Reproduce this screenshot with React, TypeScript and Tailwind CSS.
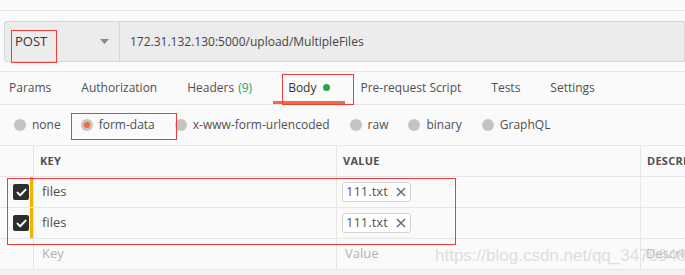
import React from "react";

const tabs = [
  { label: "Params" },
  { label: "Authorization" },
  { label: "Headers", count: "(9)" },
  { label: "Body", active: true },
  { label: "Pre-request Script" },
  { label: "Tests" },
  { label: "Settings" },
];

const bodyTypes = ["none", "form-data", "x-www-form-urlencoded", "raw", "binary", "GraphQL"];

const rows = [
  { key: "files", file: "111.txt" },
  { key: "files", file: "111.txt" },
];

const Radio = ({ on }: { on?: boolean }) => (
  <span className="w-3 h-3 rounded-full bg-[#c4c4c4] flex items-center justify-center">
    {on && <span className="w-[6px] h-[6px] rounded-full bg-[#f26b3a]" />}
  </span>
);

const CheckBox = () => (
  <span className="w-4 h-4 rounded-[2px] bg-[#2d2d2d] flex items-center justify-center">
    <svg width="11" height="9" viewBox="0 0 11 9">
      <path d="M1.5 4.6 L4.2 7.2 L9.6 1.6" stroke="#fff" strokeWidth="2" fill="none" strokeLinecap="round" strokeLinejoin="round" />
    </svg>
  </span>
);

const FileChip = ({ name }: { name: string }) => (
  <span className="h-5 flex items-center gap-[8px] pl-[3px] pr-[4px] border border-[#d4d4d4] rounded-[3px] bg-white text-[#555]">
    {name}
    <svg width="10" height="10" viewBox="0 0 10 10">
      <path d="M1 1 L9 9 M9 1 L1 9" stroke="#6a6a6a" strokeWidth="1.5" />
    </svg>
  </span>
);

const App = () => {
  return (
    <div className="relative w-[685px] h-[275px] overflow-hidden bg-[#fafafa] text-[12px] text-[#505050] font-['Open_Sans',sans-serif]">
      <div className="h-[11px] border-b border-[#e6e6e6]" />

      <div className="mt-[10px] ml-[4px] h-[41px] flex border border-[#d6d6d6] rounded-l-[3px] bg-[#ececec]">
        <div className="w-[115px] shrink-0 flex items-center justify-between pl-[10px] pr-[10px] border-r border-[#d6d6d6] text-[13px] text-[#333]">
          <span className="font-medium">POST</span>
          <svg width="9" height="5" viewBox="0 0 9 5">
            <path d="M0 0 H9 L4.5 5 Z" fill="#888" />
          </svg>
        </div>
        <div className="flex items-center pl-[10px] text-[12px] text-[#444]">172.31.132.130:5000/upload/MultipleFiles</div>
      </div>

      <div className="mt-[9px] h-[34px] flex border-t border-b border-[#e6e6e6] ml-[-6px] text-[12px]">
        {tabs.map((t) => (
          <div
            key={t.label}
            className={`h-full flex items-center gap-[7px] px-[15px] pt-[2px] border-b-[3px] ${
              t.active ? "border-[#f26b3a] text-[#333]" : "border-transparent"
            }`}
          >
            <span>
              {t.label}
              {t.count && <span className="ml-1 mr-[6px] text-[#26a65b]">{t.count}</span>}
            </span>
            {t.active && <span className="w-[7px] h-[7px] rounded-full bg-[#2ba24c]" />}
          </div>
        ))}
      </div>

      <div className="h-[40px] flex items-center pl-[14px] gap-[20px] text-[12px]">
        {bodyTypes.map((b) => (
          <div key={b} className="flex items-center gap-[6px]">
            <Radio on={b === "form-data"} />
            <span>{b}</span>
          </div>
        ))}
      </div>

      <div className="border-t border-[#e6e6e6]">
        <div className="h-[31px] flex border-b border-[#e6e6e6] text-[11px] font-bold text-[#505050] tracking-wide">
          <div className="w-[34px] shrink-0 border-r border-[#e6e6e6]" />
          <div className="w-[303px] shrink-0 flex items-center pl-[6px] border-r border-[#e6e6e6]">KEY</div>
          <div className="w-[304px] shrink-0 flex items-center pl-[6px] border-r border-[#e6e6e6]">VALUE</div>
          <div className="flex-1 flex items-center pl-[6px] whitespace-nowrap">DESCRIPTION</div>
        </div>

        {rows.map((r, i) => (
          <div key={i} className="h-[31px] flex border-b border-[#e6e6e6] text-[13px]">
            <div className="w-[34px] shrink-0 flex items-center justify-end border-r border-[#e6e6e6]">
              <span className="mr-[1px]">
                <CheckBox />
              </span>
              <span className="w-[3px] h-full bg-[#f2b300]" />
            </div>
            <div className="w-[303px] shrink-0 flex items-center pl-[8px] border-r border-[#e6e6e6]">{r.key}</div>
            <div className="w-[304px] shrink-0 flex items-center pl-[5px] border-r border-[#e6e6e6]">
              <FileChip name={r.file} />
            </div>
            <div className="flex-1" />
          </div>
        ))}

        <div className="h-[31px] flex border-b border-[#e6e6e6] text-[13px] text-[#b3b3b3]">
          <div className="w-[34px] shrink-0 border-r border-[#e6e6e6]" />
          <div className="w-[303px] shrink-0 flex items-center pl-[8px] border-r border-[#e6e6e6]">Key</div>
          <div className="w-[304px] shrink-0 flex items-center pl-[8px] border-r border-[#e6e6e6]">Value</div>
          <div className="flex-1 flex items-center pl-[5px] whitespace-nowrap">Description</div>
        </div>
      </div>
      <div className="h-[10px] bg-[#f2f2f2]" />

      {/* annotation boxes & watermark */}
      <div className="absolute left-[11px] top-[30px] w-[46px] h-[33px] border border-[#f03c3c]" />
      <div className="absolute left-[282px] top-[74px] w-[72px] h-[31px] border border-[#f03c3c]" />
      <div className="absolute left-[71px] top-[113px] w-[106px] h-[27px] border border-[#f03c3c]" />
      <div className="absolute left-[7px] top-[178px] w-[449px] h-[67px] border border-[#f03c3c]" />
      <div className="absolute left-[435px] top-[243px] text-[17px] text-[#d6d6d6]/80 font-['Liberation_Sans',sans-serif] whitespace-nowrap">
        https://blog.csdn.net/qq_34759481
      </div>
    </div>
  );
};

export default App;
